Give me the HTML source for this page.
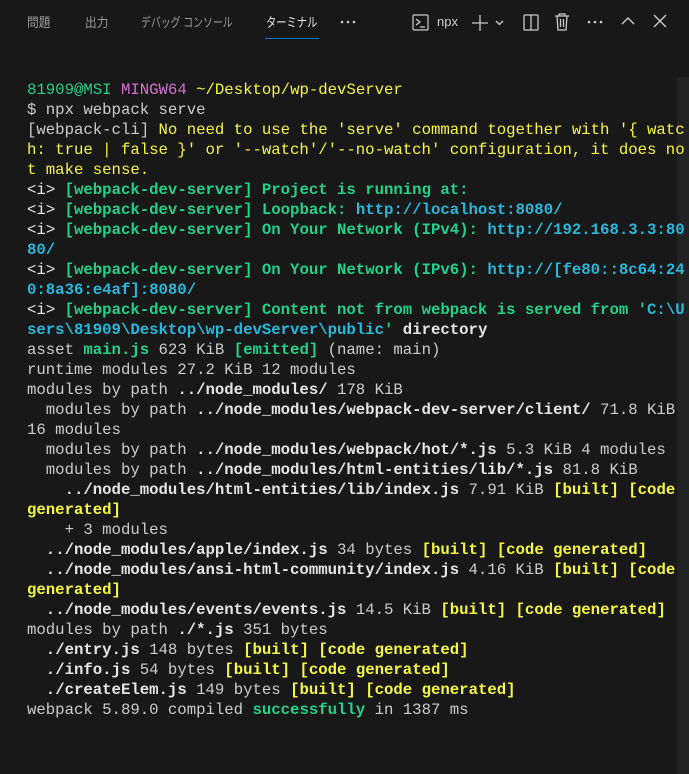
<!DOCTYPE html>
<html><head><meta charset="utf-8"><style>
body{margin:0;width:689px;height:774px;background:#181818;overflow:hidden;position:relative;font-family:"Liberation Sans","Noto Sans CJK JP",sans-serif}
.tabs{position:absolute;top:0;left:0;right:0;height:46px;}
.tab{position:absolute;top:12px;font-size:13px;color:#9d9d9d;transform-origin:0 0;white-space:nowrap}
.act{color:#e7e7e7}
.ul{position:absolute;left:265px;top:38px;width:54px;height:1px;background:#0078d4}
.ic{position:absolute;color:#cccccc}
.term{position:absolute;left:27px;top:80px;font-family:"Liberation Mono",monospace;font-size:15.7px;line-height:20px;color:#cccccc;white-space:pre;letter-spacing:-0.02px}
.g{color:#23d18b}.y{color:#f5f543}.m{color:#d670d6}.b{color:#29b8db}.w{color:#e5e5e5}
b{font-weight:bold}
.sb{position:absolute;right:0;top:77px;width:12px;height:697px;background:#222}
</style></head><body>
<div class="tabs">
<span class="tab" style="left:27px;transform:scaleX(0.9)">問題</span>
<span class="tab" style="left:85px;transform:scaleX(0.9)">出力</span>
<span class="tab" style="left:141px;transform:scaleX(0.76)">デバッグ コンソール</span>
<span class="tab act" style="left:266px;transform:scaleX(0.79)">ターミナル</span>
<svg class="ic" style="left:340px;top:20px" width="20" height="4" viewBox="0 0 20 4" fill="#ccc"><circle cx="2" cy="2" r="1.3"/><circle cx="8" cy="2" r="1.3"/><circle cx="14" cy="2" r="1.3"/></svg>
<div class="ul"></div>
<svg class="ic" style="left:412px;top:14px" width="18" height="18" viewBox="0 0 18 18" fill="none" stroke="#ccc" stroke-width="1.2"><rect x="1" y="1" width="15" height="15" rx="1"/><path d="M4 5l4 3-4 3M8 13h5"/></svg>
<span class="tab" style="left:437px;top:14px;color:#ccc;font-size:13px">npx</span>
<svg class="ic" style="left:471px;top:13px" width="34" height="20" viewBox="0 0 34 20" fill="none" stroke="#ccc" stroke-width="1.3"><path d="M9 2v16M1 10h16M25 8l3.5 3.5L32 8"/></svg>
<svg class="ic" style="left:522px;top:13px" width="18" height="19" viewBox="0 0 18 19" fill="none" stroke="#ccc" stroke-width="1.3"><rect x="2" y="2" width="14" height="15" rx="1"/><path d="M9 2v15"/></svg>
<svg class="ic" style="left:553px;top:12px" width="18" height="20" viewBox="0 0 18 20" fill="none" stroke="#ccc" stroke-width="1.3"><path d="M2 4h14M6 4V2h6v2M4 4l1 14h8l1-14M7.5 7v8M10.5 7v8"/></svg>
<svg class="ic" style="left:587px;top:20px" width="20" height="4" viewBox="0 0 20 4" fill="#ccc"><circle cx="2" cy="2" r="1.3"/><circle cx="8" cy="2" r="1.3"/><circle cx="14" cy="2" r="1.3"/></svg>
<svg class="ic" style="left:620px;top:14px" width="16" height="14" viewBox="0 0 16 14" fill="none" stroke="#ccc" stroke-width="1.4"><path d="M2 10l6-6 6 6"/></svg>
<svg class="ic" style="left:653px;top:14px" width="14" height="14" viewBox="0 0 14 14" fill="none" stroke="#ccc" stroke-width="1.4"><path d="M1 1l12 12M13 1L1 13"/></svg>
</div>
<div class="sb"></div>
<div class="term"><span class="g">81909@MSI</span> <span class="m">MINGW64</span> <span class="y">~/Desktop/wp-devServer</span>
$ npx webpack serve
[webpack-cli] <span class="y">No need to use the 'serve' command together with '{ watc</span>
<span class="y">h: true | false }' or '--watch'/'--no-watch' configuration, it does no</span>
<span class="y">t make sense.</span>
<span class="w">&lt;i&gt;</span> <b class="g">[webpack-dev-server] Project is running at:</b>
<span class="w">&lt;i&gt;</span> <b class="g">[webpack-dev-server] Loopback: </b><b class="b">http://localhost:8080/</b>
<span class="w">&lt;i&gt;</span> <b class="g">[webpack-dev-server] On Your Network (IPv4): </b><b class="b">http://192.168.3.3:80</b>
<b class="b">80/</b>
<span class="w">&lt;i&gt;</span> <b class="g">[webpack-dev-server] On Your Network (IPv6): </b><b class="b">http://[fe80::8c64:24</b>
<b class="b">0:8a36:e4af]:8080/</b>
<span class="w">&lt;i&gt;</span> <b class="g">[webpack-dev-server] Content not from webpack is served from '</b><b class="b">C:\U</b>
<b class="b">sers\81909\Desktop\wp-devServer\public</b><b class="g">'</b> <b class="w">directory</b>
asset <b class="g">main.js</b> 623 KiB <b class="g">[emitted]</b> (name: main)
runtime modules 27.2 KiB 12 modules
modules by path <b class="w">../node_modules/</b> 178 KiB
  modules by path <b class="w">../node_modules/webpack-dev-server/client/</b> 71.8 KiB
16 modules
  modules by path <b class="w">../node_modules/webpack/hot/*.js</b> 5.3 KiB 4 modules
  modules by path <b class="w">../node_modules/html-entities/lib/*.js</b> 81.8 KiB
    <b class="w">../node_modules/html-entities/lib/index.js</b> 7.91 KiB <b class="y">[built]</b> <b class="y">[code</b>
<b class="y">generated]</b>
    + 3 modules
  <b class="w">../node_modules/apple/index.js</b> 34 bytes <b class="y">[built]</b> <b class="y">[code generated]</b>
  <b class="w">../node_modules/ansi-html-community/index.js</b> 4.16 KiB <b class="y">[built]</b> <b class="y">[code</b>
<b class="y">generated]</b>
  <b class="w">../node_modules/events/events.js</b> 14.5 KiB <b class="y">[built]</b> <b class="y">[code generated]</b>
modules by path <b class="w">./*.js</b> 351 bytes
  <b class="w">./entry.js</b> 148 bytes <b class="y">[built]</b> <b class="y">[code generated]</b>
  <b class="w">./info.js</b> 54 bytes <b class="y">[built]</b> <b class="y">[code generated]</b>
  <b class="w">./createElem.js</b> 149 bytes <b class="y">[built]</b> <b class="y">[code generated]</b>
webpack 5.89.0 compiled <b class="g">successfully</b> in 1387 ms</div>
</body></html>
